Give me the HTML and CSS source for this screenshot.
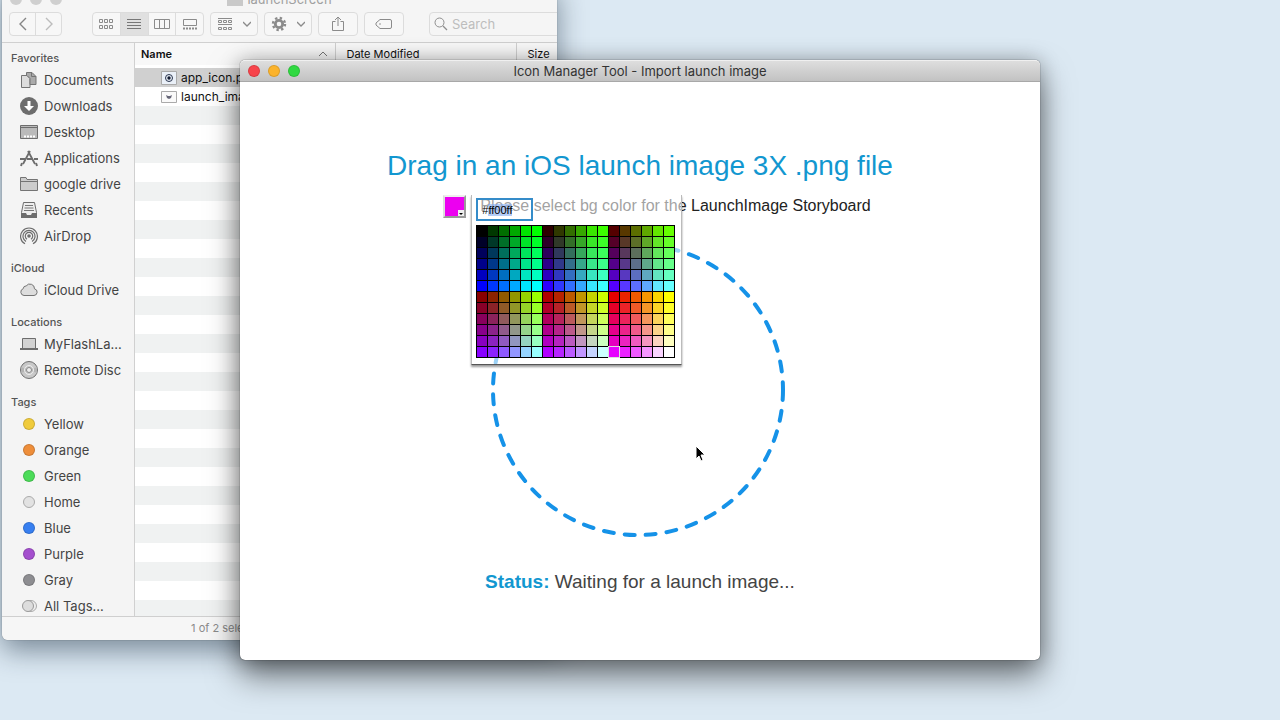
FILE: index.html
```html
<!DOCTYPE html>
<html lang="en">
<head>
<meta charset="utf-8">
<title>Icon Manager Tool - Import launch image</title>
<link rel="stylesheet" href="styles.css">
</head>
<body>
<main class="desktop">
  <section class="finder" aria-label="launchScreen">
    <header class="finder-title">
      <div class="finder-lights"><i></i><i></i><i></i></div>
      <div class="finder-name"><svg width="16" height="13" viewBox="0 0 16 13"><path d="M0 1h6l2 2h8v10H0z" fill="#c9c9c9"/></svg><span>launchScreen</span></div>
    </header>
    <div class="toolbar">
      <div class="group nav">
        <button aria-label="Back"><svg width="10" height="14" viewBox="0 0 10 14"><path d="M8 1 2 7l6 6" stroke="#858585" stroke-width="1.4"/></svg></button>
        <button aria-label="Forward"><svg width="10" height="14" viewBox="0 0 10 14"><path d="m2 1 6 6-6 6" stroke="#bcbcbc" stroke-width="1.4"/></svg></button>
      </div>
      <div class="group views">
        <button aria-label="Icons"><svg width="16" height="12" viewBox="0 0 16 12"><g stroke="#8b8b8b"><path d="M1.500 1.500h3v3h-3zM6.500 1.500h3v3h-3zM11.500 1.500h3v3h-3zM1.500 7.500h3v3h-3zM6.500 7.500h3v3h-3zM11.500 7.500h3v3h-3z"/></g></svg></button>
        <button class="on" aria-label="List"><svg width="14" height="12" viewBox="0 0 14 12"><path d="M0 1.500h14M0 4.500h14M0 7.500h14M0 10.500h14" stroke="#777"/></svg></button>
        <button aria-label="Columns"><svg width="16" height="12" viewBox="0 0 16 12"><path d="M.5 1.500h15v9H.5zM5.500 1.500v9M10.500 1.500v9" stroke="#8b8b8b"/></svg></button>
        <button aria-label="Gallery"><svg width="16" height="12" viewBox="0 0 16 12"><path d="M1.500 1.500h13v6h-13z" stroke="#8b8b8b"/><path d="M1 10.500h14" stroke="#8b8b8b" stroke-width="2" stroke-dasharray="2 1"/></svg></button>
      </div>
      <div class="group arrange">
        <button aria-label="Arrange"><svg width="16" height="14" viewBox="0 0 16 14"><path d="M1 1.500h14M1 7.500h14" stroke="#8b8b8b"/><path d="M1.500 3.500h3v2h-3zM6.500 3.500h3v2h-3zM11.500 3.500h3v2h-3zM1.500 10.500h3v2h-3zM6.500 10.500h3v2h-3zM11.500 10.500h3v2h-3z" stroke="#8b8b8b"/></svg><svg width="8" height="6" viewBox="0 0 8 6"><path d="m0 1 4 4 4-4" stroke="#8b8b8b" stroke-width="1.3"/></svg></button>
      </div>
      <div class="group action">
        <button aria-label="Action"><svg width="16" height="16" viewBox="0 0 16 16"><circle cx="8" cy="8" r="6" stroke="#8b8b8b" stroke-width="2.400" stroke-dasharray="2.350 2.360"/><circle cx="8" cy="8" r="3.700" stroke="#8b8b8b" stroke-width="2.800"/></svg><svg width="8" height="6" viewBox="0 0 8 6"><path d="m0 1 4 4 4-4" stroke="#8b8b8b" stroke-width="1.3"/></svg></button>
      </div>
      <div class="group single"><button aria-label="Share"><svg width="14" height="16" viewBox="0 0 14 16"><path d="M4.500 5.500h-3v9h11v-9h-3M7 10V1M4 4l3-3 3 3" stroke="#8b8b8b"/></svg></button></div>
      <div class="group single"><button aria-label="Tags"><svg width="18" height="12" viewBox="0 0 18 12"><path d="M5 1.500h10q1.500 0 1.500 1.500v6q0 1.500-1.500 1.500H5L1 7V5z" stroke="#8b8b8b"/><circle cx="5" cy="6" r=".8" fill="#8b8b8b"/></svg></button></div>
      <label class="search"><svg width="14" height="14" viewBox="0 0 14 14"><circle cx="5.500" cy="5.500" r="4.500" stroke="#8e8e8e"/><path d="m9 9 4 4" stroke="#8e8e8e" stroke-width="1.300"/></svg><input type="text" placeholder="Search" aria-label="Search"></label>
    </div>
    <div class="finder-main">
      <nav class="sidebar">
        <section>
          <h2>Favorites</h2>
          <ul>
            <li><svg class="ic" viewBox="0 0 18 18"><path d="M1.500 4.500H7l3 3v9H1.500z" fill="#ddd" stroke="#747474"/><path d="M6.500 1.500H12l4 4v8h-6v-6L7 4.500h-.5z" fill="#aaa" stroke="#747474"/><path d="M11.500 1.500v4H16" stroke="#747474"/></svg>Documents</li>
            <li><svg class="ic" viewBox="0 0 18 18"><circle cx="9" cy="9" r="9" fill="#6d6d6d"/><path d="M7.500 4h3v5H14l-5 5-5-5h3.500z" fill="#fff"/></svg>Downloads</li>
            <li><svg class="ic" viewBox="0 0 18 18"><path d="M.5 2.500h17v13H.5z" fill="#bababa" stroke="#6d6d6d"/><path d="M1 4.500h16" stroke="#6d6d6d"/><path d="M4 13.500h11" stroke="#fff" stroke-width="2" stroke-dasharray="2 1"/></svg>Desktop</li>
            <li><svg class="ic" viewBox="0 0 18 18"><path d="M10 2 3 15M8 2l7 13" stroke="#6d6d6d" stroke-width="1.800"/><path d="M0 10h5M7 10h5M14 10h4M2 14l-1 3M16 14l1 3" stroke="#6d6d6d" stroke-width="2"/></svg>Applications</li>
            <li><svg class="ic" viewBox="0 0 18 18"><path d="M.5 15.500v-13H6l1 2h10.500v11z" fill="#ccc" stroke="#747474"/><path d="M1 6.500h16" stroke="#747474"/></svg>google drive</li>
            <li><svg class="ic" viewBox="0 0 18 18"><path d="M3.500 1.500h11l2 10v5h-15v-5z" fill="#eee" stroke="#6d6d6d"/><path d="M1 12h5l1 2h4l1-2h5v5H1z" fill="#6d6d6d"/><path d="M5 4.500h8M4.500 7h9M4 9.500h10" stroke="#777"/></svg>Recents</li>
            <li><svg class="ic" viewBox="0 0 18 18"><g stroke="#6d6d6d" stroke-width="1.200"><path d="M5 16.800a8.400 8.400 0 1 1 8 0M6 14.500a6 6 0 1 1 6 0M7 12.200a3.700 3.700 0 1 1 4 0"/></g><circle cx="9" cy="9" r="1.800" fill="#6d6d6d"/></svg>AirDrop</li>
          </ul>
        </section>
        <section>
          <h2>iCloud</h2>
          <ul>
            <li><svg class="ic" viewBox="0 0 18 18"><path d="M4 14.500a3.500 3.500 0 0 1-.8-6.800 3 3 0 0 1 3-2.800 4.600 4.600 0 0 1 8.300 2.900 3.400 3.400 0 0 1-.5 6.700z" fill="#ddd" stroke="#747474"/></svg>iCloud Drive</li>
          </ul>
        </section>
        <section>
          <h2>Locations</h2>
          <ul>
            <li><svg class="ic" viewBox="0 0 18 18"><path d="M2.500 3.500h13v10h-13z" fill="#d2d2d2" stroke="#6d6d6d"/><path d="M0 14h18" stroke="#6d6d6d" stroke-width="2"/></svg>MyFlashLa...</li>
            <li><svg class="ic" viewBox="0 0 18 18"><circle cx="9" cy="9" r="8.500" fill="#c8c8c8" stroke="#707070"/><path d="m9 9-8-3v6zM9 9l8-3v6z" fill="#b4b4b4"/><circle cx="9" cy="9" r="4.500" stroke="#eee"/><circle cx="9" cy="9" r="2.500" fill="#eee" stroke="#8a8a8a"/></svg>Remote Disc</li>
          </ul>
        </section>
        <section>
          <h2>Tags</h2>
          <ul>
            <li><span class="dot yellow"></span>Yellow</li>
            <li><span class="dot orange"></span>Orange</li>
            <li><span class="dot green"></span>Green</li>
            <li><span class="dot home"></span>Home</li>
            <li><span class="dot blue"></span>Blue</li>
            <li><span class="dot purple"></span>Purple</li>
            <li><span class="dot gray"></span>Gray</li>
            <li><svg class="ic" viewBox="0 0 18 18"><circle cx="11" cy="9" r="5.500" fill="#eee" stroke="#aaa"/><circle cx="8" cy="9" r="5.500" fill="#ddd" stroke="#999"/></svg>All Tags...</li>
          </ul>
        </section>
      </nav>
      <div class="files">
        <table>
          <thead><tr><th class="col-name"><span>Name<svg width="8" height="6" viewBox="0 0 8 6"><path d="m0 5 4-4 4 4" stroke="#777"/></svg></span></th><th class="col-date">Date Modified</th><th class="col-size">Size</th></tr></thead>
          <tbody>
            <tr class="selected"><td><span class="file"><svg width="16" height="14" viewBox="0 0 16 14"><path d="M.5.5h15v13H.5z" fill="#eaf0f8" stroke="#aaa"/><circle cx="8" cy="7" r="3.500" stroke="#27334d"/><circle cx="8" cy="7" r="1.700" fill="#101a30"/></svg>app_icon.png</span></td><td></td><td></td></tr>
            <tr><td><span class="file"><svg width="16" height="12" viewBox="0 0 16 12"><path d="M.5.5h15v11H.5z" fill="#fafafa" stroke="#aaa"/><path d="m5 4 2 1h2l2-1-1 3-2 1-2-1z" fill="#667"/></svg>launch_image.png</span></td><td></td><td></td></tr>
          </tbody>
        </table>
      </div>
    </div>
    <footer class="finder-foot">1 of 2 selected, 144.5 GB available</footer>
  </section>

  <section class="tool" aria-label="Icon Manager Tool">
    <header class="tool-title">
      <div class="lights"><button class="red" aria-label="Close"></button><button class="amber" aria-label="Minimize"></button><button class="lime" aria-label="Zoom"></button></div>
      <span>Icon Manager Tool - Import launch image</span>
    </header>
    <div class="tool-body">
      <h1>Drag in an iOS launch image 3X .png file</h1>
      <div class="picker-row">
        <div class="picker">
          <button class="well" aria-label="Background color"><svg width="6" height="6" viewBox="0 0 6 6"><path d="M0 0h6v6H0z" fill="#eee"/><path d="M1 3h4L3 5z" fill="#000"/></svg></button>
          <div class="popup">
            <input class="hex" type="text" value="#ff00ff" aria-label="Hex color" spellcheck="false">
            <div class="palette"></div>
          </div>
        </div>
        <p>Please select bg color for the LaunchImage Storyboard</p>
      </div>
      <svg class="drop" width="300" height="300" viewBox="0 0 300 300"><circle cx="148" cy="150" r="145" stroke="#1592e8" stroke-width="4" stroke-linecap="round" stroke-dasharray="10 11"/></svg>
      <p class="status"><strong>Status:</strong> Waiting for a launch image...</p>
    </div>
  </section>
  <svg class="cursor" width="12" height="18" viewBox="0 0 12 18"><path d="M1 1v13l3-3 2 5 2-1-2-5h4z" fill="#000" stroke="#fff"/></svg>
</main>
<script src="palette.js"></script>
</body>
</html>
```
FILE: styles.css
```css
* { box-sizing: border-box; }
body { margin: 0; font-family: Inter, "Liberation Sans", sans-serif; }
h1, h2, p, ul { margin: 0; padding: 0; }
ul { list-style: none; }
button { padding: 0; border: 0; background: none; font: inherit; }
svg { display: block; fill: none; flex: none; }

.desktop { position: relative; height: 100vh; overflow: hidden; background: #dce9f3; }

.finder {
  position: absolute; left: 2px; top: -18px; width: 555px; height: 658px;
  display: flex; flex-direction: column; overflow: hidden;
  border-radius: 6px; background: #f5f5f5;
  box-shadow: 0 0 1px rgba(0,0,0,.6), 0 10px 28px rgba(20,40,60,.5);
}
.finder-title { display: flex; align-items: center; height: 30px; padding: 0 8px; flex: none; }
.finder-lights { display: flex; gap: 8px; flex: 1; }
.finder-lights i { width: 12px; height: 12px; border-radius: 50%; background: #cfcfcf; margin-top: 4px; }
.finder-name { display: flex; align-items: center; gap: 4px; color: #a0a0a0; font-size: 13px; line-height: 20px; padding-top: 4px; }
.finder-title::after { content: ""; flex: 1; }
.toolbar { display: flex; align-items: center; height: 31px; padding: 0 8px 7px 7px; flex: none; border-bottom: 1px solid #d0d0d0; }
.group { display: flex; height: 24px; border: 1px solid #dcdcdc; border-radius: 4px; background: #f7f7f7; flex: none; }
.group button { display: flex; align-items: center; justify-content: center; gap: 10px; flex: 1; }
.group button + button { border-left: 1px solid #dcdcdc; }
.group .on { background: #e0e0e0; }
.nav { width: 53px; margin-right: 30px; }
.views { width: 112px; margin-right: 6px; }
.arrange { width: 48px; margin-right: 6px; }
.action { width: 48px; margin-right: 6px; }
.single { width: 40px; margin-right: 6px; }
.search { display: flex; align-items: center; gap: 4px; flex: 1; height: 24px; margin-left: 19px; padding: 0 4px; border: 1px solid #dcdcdc; border-radius: 4px; }
.search input { flex: 1; min-width: 0; border: 0; padding: 0; background: none; font: 13px Inter, sans-serif; }
.search input::placeholder { color: #bdbdbd; }

.finder-main { display: flex; flex: 1; min-height: 0; }
.sidebar { width: 133px; flex: none; overflow: hidden; display: flex; flex-direction: column; gap: 10px; padding: 6px 0 0 9px; border-right: 1px solid #d0d0d0; background: #f4f4f4; }
.sidebar h2 { font-size: 11px; font-weight: 500; line-height: 18px; color: #555; }
.sidebar li { display: flex; align-items: center; gap: 6px; height: 26px; padding-left: 9px; color: #444; font-size: 13px; white-space: nowrap; }
.ic { width: 18px; height: 18px; }
.dot { width: 12px; height: 12px; margin: 0 3px; border-radius: 50%; border: 1px solid rgba(0,0,0,.15); }
.yellow { background: #f0cb3c; }
.orange { background: #ee8e3a; }
.green { background: #4cdc59; }
.home { background: #e2e2e2; border-color: #aaa; }
.blue { background: #377ff0; }
.purple { background: #a44fce; }
.gray { background: #8d8d91; }
.files { flex: 1; min-width: 0; overflow: hidden; background: repeating-linear-gradient(#fff 0 19px, #f0f2f2 19px 38px) 0 6px; }
.files table { width: 100%; border-collapse: collapse; table-layout: fixed; font-size: 12px; }
.files th { height: 22px; padding: 0 0 0 11px; text-align: left; font-size: 11px; font-weight: 400; line-height: 22px; color: #111; background: #f8f8f8; border-right: 1px solid #d0d0d0; border-bottom: 3px solid #fff; white-space: nowrap; }
.files .col-name { width: 200px; padding-left: 6px; font-weight: 600; }
.col-name span { display: flex; justify-content: space-between; align-items: center; padding-right: 8px; }
.col-date { width: 181px; }
.files .col-size { border-right: 0; }
.files td { height: 19px; padding: 0; }
.selected { background: #d0d0d0; }
.file { display: flex; align-items: center; gap: 4px; padding-left: 26px; line-height: 19px; color: #111; }
.finder-foot { flex: none; height: 24px; border-top: 1px solid #cfcfcf; background: #f6f6f6; text-align: center; font-size: 11px; line-height: 23px; color: #8a8a8a; }

.tool {
  position: absolute; left: 240px; top: 60px; width: 800px; height: 600px;
  display: flex; flex-direction: column; border-radius: 5px; background: #fff;
  box-shadow: 0 0 1px #000, 0 16px 32px rgba(0,0,0,.5), 0 0 20px rgba(0,0,0,.25);
}
.tool-title { position: relative; display: flex; align-items: center; justify-content: center; height: 22px; border-radius: 5px 5px 0 0; border-top: 1px solid #f0f0f0; border-bottom: 1px solid #a8a8a8; background: linear-gradient(#dedede, #c2c2c2); color: #333; font-size: 13px; line-height: 20px; }
.lights { position: absolute; left: 8px; top: 4px; display: flex; gap: 8px; }
.lights button { width: 12px; height: 12px; border-radius: 50%; border: 1px solid rgba(0,0,0,.12); }
.red { background: #f7444b; }
.amber { background: #fbb32c; }
.lime { background: #30d941; }
.tool-body { display: flex; flex-direction: column; align-items: center; padding-top: 66px; font-family: "Liberation Sans", sans-serif; }
.tool-body h1 { font-size: 28px; font-weight: 400; line-height: 36px; color: #1297d0; white-space: nowrap; }
.picker-row { display: flex; align-items: center; gap: 14px; height: 24px; margin-top: 10px; padding-left: 34px; font-size: 16px; color: #222; white-space: nowrap; }
.picker { position: relative; }
.well { display: flex; align-items: flex-end; justify-content: flex-end; width: 23px; height: 23px; border: 2px solid; border-color: #eee #999 #999 #ddd; background: #ec00f0; }
.popup { position: absolute; z-index: 1; left: 28px; top: 0; padding: 3px 6px 6px 4px; background: rgba(255,255,255,.58); border: solid #bbb; border-width: 0 1px 1px 1px; border-bottom-color: #555; box-shadow: 0 2px 2px rgba(0,0,0,.4); clip-path: inset(0 -4px -6px -4px); }
.hex { display: block; width: 57px; height: 23px; padding: 1px 3px 0 4px; border: 2px solid #358cc9; outline: 0; background: transparent; color: #000; font: 11px "Liberation Sans", sans-serif; }
.hex::selection { background: rgba(130,170,240,.6); color: #000; }
.palette { display: grid; grid-template-columns: repeat(18, 10px); grid-auto-rows: 10px; gap: 1px; padding: 1px; margin-top: 4px; background: #000; }
.palette .current { outline: 1px solid #ddd; }
.drop { margin-top: 22px; }
.status { margin-top: 30px; font-size: 19px; line-height: 24px; color: #444; }
.status strong { color: #1297d0; }
.cursor { position: absolute; left: 695px; top: 445px; }
```
FILE: palette.js
```javascript
const RED = [[0, 0], [45, 60], [85, 102], [136, 153], [176, 204], [230, 255]];
const GREEN = [
  [0, 56, 110, 168, 230, 255],
  [0, 35, 90, 150, 212, 255]
];
const BLUE = [0, 40, 92, 138, 192, 255];
const palette = document.querySelector(".palette");
for (let row = 0; row < 12; row++) {
  for (let col = 0; col < 18; col++) {
    const half = Math.floor(row / 6);
    const r = half * 3 + Math.floor(col / 6);
    const g = col % 6;
    const b = row % 6;
    const red = Math.round(RED[r][0] + (RED[r][1] - RED[r][0]) * g / 5);
    const swatch = document.createElement("button");
    swatch.style.background = `rgb(${red}, ${GREEN[half][g]}, ${BLUE[b]})`;
    swatch.setAttribute("aria-label", `Red ${r}, green ${g}, blue ${b}`);
    if (r === 5 && g === 0 && b === 5) swatch.className = "current";
    palette.append(swatch);
  }
}
const hex = document.querySelector(".hex");
hex.focus();
hex.setSelectionRange(1, 7);
```
